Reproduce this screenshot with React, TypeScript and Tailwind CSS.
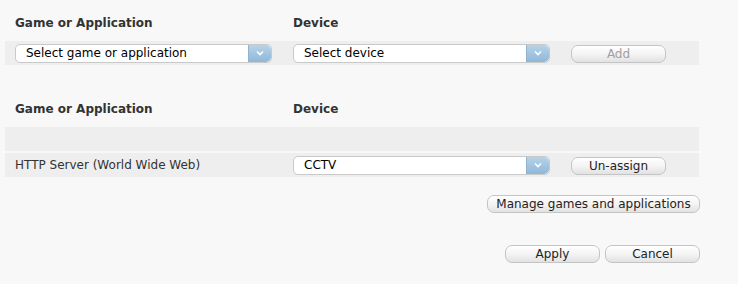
import React from 'react';

const font = { fontFamily: '"DejaVu Sans", Verdana, sans-serif' };

const Select: React.FC<{ label: string }> = ({ label }) => (
    <div className="flex h-[19px] w-[257px] items-stretch rounded-[5px] border border-[#c9c9c9] bg-white">
        <div className="flex flex-1 items-center pl-[10px] text-[12px] leading-none text-black">{label}</div>
        <div className="flex w-[23px] items-center justify-center rounded-r-[5px] border-l border-[#8fb3cf] bg-gradient-to-b from-[#b7d3e8] to-[#8eb8d8]">
            <svg width="8" height="6" viewBox="0 0 8 6">
                <path d="M1 1.5 L4 4.5 L7 1.5" fill="none" stroke="white" strokeWidth="1.6" />
            </svg>
        </div>
    </div>
);

const Btn: React.FC<{ label: string; w: string; disabled?: boolean }> = ({ label, w, disabled }) => (
    <button
        className={`${w} flex h-[18px] items-center justify-center rounded-[7px] border border-[#c4c4c4] bg-gradient-to-b from-white via-[#f4f4f4] to-[#e2e2e2] text-[12px] leading-none shadow-[inset_0_1px_0_white] ${disabled ? 'text-[#a0a0a0]' : 'text-[#222]'}`}
    >
        {label}
    </button>
);

const Header: React.FC = () => (
    <div className="flex h-[41px] items-end pb-[9px] text-[12px] font-bold text-[#333]">
        <div className="w-[293px] pl-[15px]">Game or Application</div>
        <div>Device</div>
    </div>
);

export default function App() {
    return (
        <div className="h-[284px] w-[738px] overflow-hidden bg-[#f8f8f8]" style={font}>
            <Header />
            <div className="ml-[5px] flex h-[24px] w-[694px] items-center bg-[#eeeeee]">
                <div className="w-[288px] pl-[10px]"><Select label="Select game or application" /></div>
                <Select label="Select device" />
                <div className="ml-[21px] pt-[2px]"><Btn label="Add" w="w-[95px]" disabled /></div>
            </div>
            <div className="mt-[21px]"><Header /></div>
            <div className="ml-[5px] h-[24px] w-[694px] bg-[#eeeeee]" />
            <div className="ml-[5px] mt-[2px] flex h-[24px] w-[694px] items-center bg-[#eeeeee]">
                <div className="w-[288px] pl-[10px] text-[12px] text-[#333]">HTTP Server (World Wide Web)</div>
                <Select label="CCTV" />
                <div className="ml-[21px] pt-[2px]"><Btn label="Un-assign" w="w-[95px]" /></div>
            </div>
            <div className="mt-[18px] flex w-[700px] justify-end">
                <Btn label="Manage games and applications" w="w-[213px]" />
            </div>
            <div className="mt-[32px] flex w-[700px] justify-end gap-[5px]">
                <Btn label="Apply" w="w-[95px]" />
                <Btn label="Cancel" w="w-[95px]" />
            </div>
        </div>
    );
}
